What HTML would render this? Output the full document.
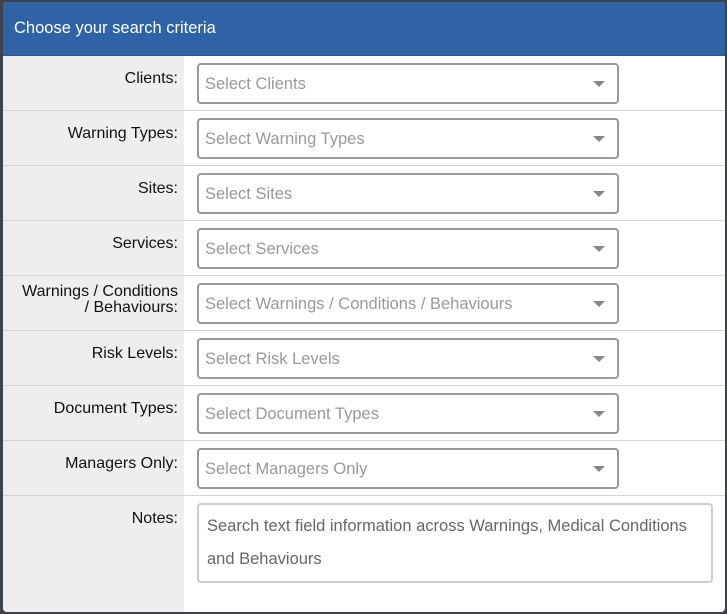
<!DOCTYPE html>
<html><head><style>
*{box-sizing:border-box;margin:0;padding:0}
body{width:727px;height:614px;background:#3b4250;font-family:"Liberation Sans",Arial,sans-serif;overflow:hidden;position:relative}
.panel{position:absolute;left:3px;top:2px;width:722px;height:610px;background:#fff;border-radius:4px;overflow:hidden}
.hdr{height:54px;background:#3063a5;color:#fff;font-size:16.5px;padding:17px 0 0 11px;border-bottom:1px solid #2a5690}
.row{position:relative;height:55px;border-bottom:1px solid #d4d4d4}
.lab{position:absolute;left:0;top:0;width:181px;height:100%;background:#eee;text-align:right;padding:15px 6px 0 0;font-size:16px;color:#111;line-height:16px}
.lab.two{padding-top:8px}
.sel{position:absolute;left:194px;top:7px;width:422px;height:41px;border:2px solid #999;border-radius:4px;color:#999;font-size:16.5px;padding:10px 0 0 6px}
.sel:after{content:"";position:absolute;right:12px;top:16px;border-left:6px solid transparent;border-right:6px solid transparent;border-top:6px solid #888}
.notes{position:relative;height:118px}
.ta{position:absolute;left:194px;top:7px;width:516px;height:80px;border:2px solid #ccc;border-radius:4px;color:#666;font-size:16.5px;line-height:33px;padding:5px 0 0 8px}
</style></head><body>
<div class="panel">
<div class="hdr">Choose your search criteria</div>
<div class="row"><div class="lab">Clients:</div><div class="sel">Select Clients</div></div>
<div class="row"><div class="lab">Warning Types:</div><div class="sel">Select Warning Types</div></div>
<div class="row"><div class="lab">Sites:</div><div class="sel">Select Sites</div></div>
<div class="row"><div class="lab">Services:</div><div class="sel">Select Services</div></div>
<div class="row"><div class="lab two">Warnings / Conditions<br>/ Behaviours:</div><div class="sel">Select Warnings / Conditions / Behaviours</div></div>
<div class="row"><div class="lab">Risk Levels:</div><div class="sel">Select Risk Levels</div></div>
<div class="row"><div class="lab">Document Types:</div><div class="sel">Select Document Types</div></div>
<div class="row"><div class="lab">Managers Only:</div><div class="sel">Select Managers Only</div></div>
<div class="notes"><div class="lab" style="padding-top:15px">Notes:</div><div class="ta">Search text field information across Warnings, Medical Conditions<br>and Behaviours</div></div>
</div>
</body></html>
